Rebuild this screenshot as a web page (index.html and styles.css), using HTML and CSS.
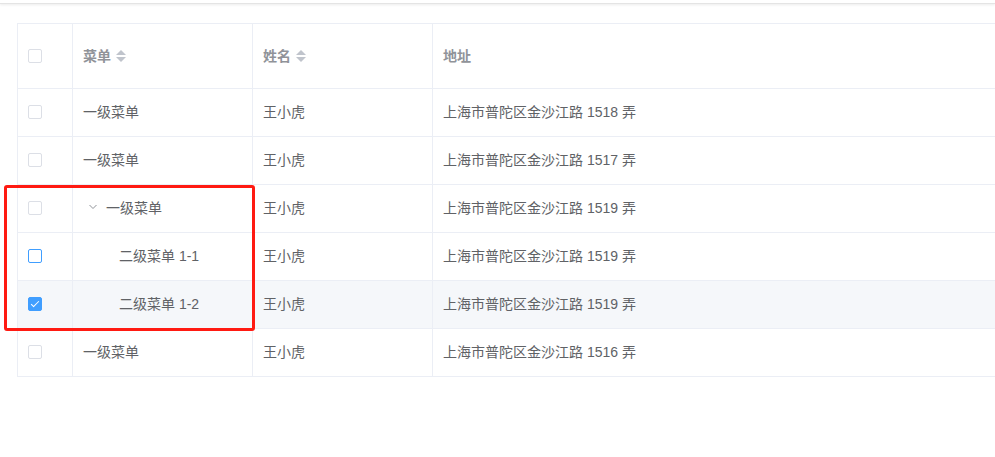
FILE: index.html
```html
<!DOCTYPE html>
<html lang="zh-CN">
<head>
    <meta charset="UTF-8">
    <title>树形表格</title>
    <link rel="stylesheet" href="styles.css">
</head>
<body>
    <div class="topbar"></div>
    <div class="page">
        <table class="tree-table">
            <colgroup>
                <col class="col-check">
                <col class="col-menu">
                <col class="col-name">
                <col class="col-addr">
            </colgroup>
            <thead>
                <tr>
                    <th><span class="checkbox"></span></th>
                    <th>菜单<span class="sort"><i class="up"></i><i class="down"></i></span></th>
                    <th>姓名<span class="sort"><i class="up"></i><i class="down"></i></span></th>
                    <th>地址</th>
                </tr>
            </thead>
            <tbody>
                <tr>
                    <td><span class="checkbox"></span></td>
                    <td>一级菜单</td>
                    <td>王小虎</td>
                    <td>上海市普陀区金沙江路 1518 弄</td>
                </tr>
                <tr>
                    <td><span class="checkbox"></span></td>
                    <td>一级菜单</td>
                    <td>王小虎</td>
                    <td>上海市普陀区金沙江路 1517 弄</td>
                </tr>
                <tr>
                    <td><span class="checkbox"></span></td>
                    <td><span class="expand"><svg width="10" height="6" viewBox="0 0 10 6"><path d="M1.5 1 L5 4.5 L8.5 1" fill="none" stroke="#909399" stroke-width="1"/></svg></span>一级菜单</td>
                    <td>王小虎</td>
                    <td>上海市普陀区金沙江路 1519 弄</td>
                </tr>
                <tr>
                    <td><span class="checkbox is-hover"></span></td>
                    <td><span class="indent"></span>二级菜单 1-1</td>
                    <td>王小虎</td>
                    <td>上海市普陀区金沙江路 1519 弄</td>
                </tr>
                <tr class="hover-row">
                    <td><span class="checkbox is-checked"></span></td>
                    <td><span class="indent"></span>二级菜单 1-2</td>
                    <td>王小虎</td>
                    <td>上海市普陀区金沙江路 1519 弄</td>
                </tr>
                <tr>
                    <td><span class="checkbox"></span></td>
                    <td>一级菜单</td>
                    <td>王小虎</td>
                    <td>上海市普陀区金沙江路 1516 弄</td>
                </tr>
            </tbody>
        </table>
        <div class="mark-box"></div>
    </div>
</body>
</html>
```

FILE: styles.css
```css
html, body {
    margin: 0;
    padding: 0;
    background-color: #fff;
    overflow: hidden;
}
body {
    font-family: "Helvetica Neue", "Liberation Sans", "Noto Sans CJK SC", sans-serif;
    font-size: 14px;
    color: #606266;
}
.topbar {
    height: 3px;
    border-bottom: 1px solid #e4e4e4;
    box-shadow: 0 1px 3px rgba(0,0,0,0.08);
}
.page {
    position: relative;
    padding: 19px 0 0 17px;
}
.tree-table {
    border-collapse: separate;
    border-spacing: 0;
    table-layout: fixed;
    width: 979px; /* 右端の罫線は画面外 */
    border-top: 1px solid #ebeef5;
    border-left: 1px solid #ebeef5;
}
.col-check { width: 55px; }
.col-menu { width: 180px; }
.col-name { width: 180px; }
.tree-table th,
.tree-table td {
    box-sizing: border-box;
    padding: 0 10px;
    text-align: left;
    white-space: nowrap;
    border-bottom: 1px solid #ebeef5;
    border-right: 1px solid #ebeef5;
    line-height: 23px;
}
.tree-table th {
    height: 65px;
    color: #909399;
    font-weight: bold;
}
.tree-table td {
    height: 48px;
}
.hover-row td {
    background-color: #f5f7fa;
}
/* チェックボックス */
.checkbox {
    display: inline-block;
    box-sizing: border-box;
    width: 14px;
    height: 14px;
    border: 1px solid #dcdfe6;
    border-radius: 2px;
    background-color: #fff;
    vertical-align: middle;
    position: relative;
    top: -1px;
}
.checkbox.is-hover {
    border-color: #409eff;
}
.checkbox.is-checked {
    background-color: #409eff;
    border-color: #409eff;
}
.checkbox.is-checked::after {
    content: "";
    position: absolute;
    left: 4px;
    top: 1px;
    width: 3px;
    height: 7px;
    border: 1px solid #fff;
    border-left: 0;
    border-top: 0;
    transform: rotate(45deg);
}
/* ソートアイコン */
.sort {
    display: inline-flex;
    flex-direction: column;
    vertical-align: middle;
    margin-left: 5px;
    gap: 2px;
    position: relative;
    top: -1px;
}
.sort i {
    display: block;
    width: 0;
    height: 0;
    border-left: 5px solid transparent;
    border-right: 5px solid transparent;
}
.sort .up {
    border-bottom: 5px solid #c0c4cc;
}
.sort .down {
    border-top: 5px solid #c0c4cc;
}
.expand {
    display: inline-block;
    width: 20px;
    margin-right: 3px;
    text-align: center;
    vertical-align: middle;
    line-height: 0;
    position: relative;
    top: -2px;
}
.indent {
    display: inline-block;
    width: 36px;
}
.mark-box {
    position: absolute;
    left: 4px;
    top: 181px;
    width: 251px;
    height: 146px;
    box-sizing: border-box;
    border: 3px solid #ff1a12;
    border-radius: 3px;
}
```
